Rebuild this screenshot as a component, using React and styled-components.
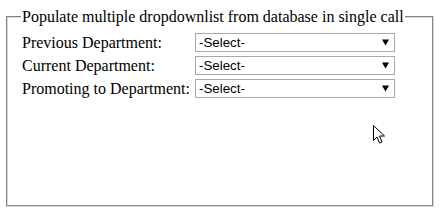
import styled, { createGlobalStyle } from 'styled-components';

const GlobalStyle = createGlobalStyle`
  html, body {
    margin: 0;
    padding: 0;
    background: #fff;
  }
  body {
    font-family: "Liberation Serif", "Times New Roman", serif;
    font-size: 16px;
  }
`;

const departments = ['Previous Department:', 'Current Department:', 'Promoting to Department:'];

const App = () => {
  return (
    <>
      <GlobalStyle />
      <St.Page>
        <St.Fieldset>
          <St.Legend>Populate multiple dropdownlist from database in single call</St.Legend>
          <St.Form>
            {departments.map((label) => (
              <St.Row key={label}>
                <St.Label>{label}</St.Label>
                <St.Select>
                  <span>-Select-</span>
                  <St.Arrow viewBox="0 0 8 7">
                    <path d="M0 0 H8 L4 7 Z" fill="#000" />
                  </St.Arrow>
                </St.Select>
              </St.Row>
            ))}
          </St.Form>
          <St.Cursor viewBox="0 0 12 19">
            <path d="M0.5 0.5 V15.5 L4 12 L6.5 18 L9 17 L6.5 11 H11.5 Z" fill="#fff" stroke="#000" strokeWidth="1" />
          </St.Cursor>
        </St.Fieldset>
      </St.Page>
    </>
  );
};

export default App;

const St = {
  Page: styled.main`
    width: 442px;
    height: 213px;
    padding: 8px 8px 0 6px;
    box-sizing: border-box;
  `,
  Fieldset: styled.fieldset`
    position: relative;
    margin: 0;
    height: 199px;
    box-sizing: border-box;
    padding: 0 12px 10px 14px;
    border: 2px groove #d8d8d8;
  `,
  Legend: styled.legend`
    padding: 0 1px;
    margin-left: -1px;
    line-height: 17px;
    color: #000;
  `,
  Form: styled.div`
    display: grid;
    grid-template-columns: 173px 200px;
    row-gap: 4px;
    margin-top: 8px;
  `,
  Row: styled.div`
    display: contents;
  `,
  Label: styled.span`
    line-height: 19px;
    white-space: nowrap;
  `,
  Select: styled.div`
    display: flex;
    align-items: center;
    justify-content: space-between;
    height: 19px;
    box-sizing: border-box;
    padding: 0 5px 0 3px;
    border: 1px solid #a9a9a9;
    font-family: "Liberation Sans", Arial, sans-serif;
    font-size: 13.33px;
    color: #000;
    background: #fff;
  `,
  Arrow: styled.svg`
    width: 7px;
    height: 7px;
  `,
  Cursor: styled.svg`
    position: absolute;
    left: 365px;
    top: 100px;
    width: 12px;
    height: 19px;
  `,
};
